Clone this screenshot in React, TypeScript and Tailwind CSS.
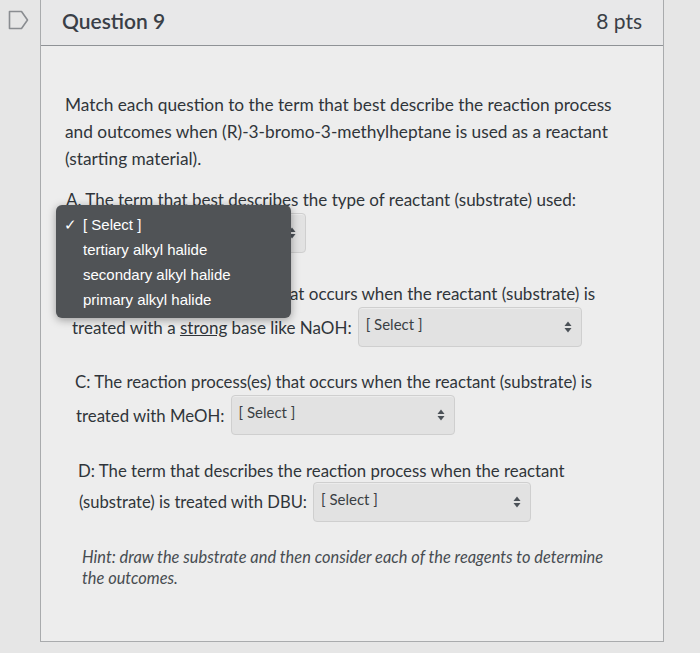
import React from 'react';

const font = { fontFamily: 'Lato, "Open Sans", sans-serif' };

const Arrows = () => (
  <svg width="8" height="12" viewBox="0 0 8 12" className="shrink-0">
    <path d="M4 0.5 L7.5 5 H0.5 Z" fill="#4b5157" />
    <path d="M4 11.5 L7.5 7 H0.5 Z" fill="#4b5157" />
  </svg>
);

const SelectBox = ({ width }: { width: string }) => (
  <div
    className={`${width} h-[40px] flex items-center justify-between pl-[7px] pr-[9px] pb-[6px] rounded-[4px] border border-[#cfcfcf] bg-[#e2e2e2] shadow-[inset_0_1px_0_#ececec]`}
  >
    <span className="text-[15px] text-[#3a3f44] leading-none">[ Select ]</span>
    <span className="pt-[6px]"><Arrows /></span>
  </div>
);

export default function App() {
  const menuItems = ['tertiary alkyl halide', 'secondary alkyl halide', 'primary alkyl halide'];

  return (
    <div className="w-[700px] h-[653px] flex bg-[#e6e6e6] text-[#30353a]" style={font}>
      {/* left gutter */}
      <div className="w-[40px] shrink-0 pt-[10px] pl-[8px]">
        <svg width="21" height="20" viewBox="0 0 21 20">
          <path d="M1.5 1.5 H13.5 L19.5 10 L13.5 18.5 H1.5 Z" fill="none" stroke="#8a8d91" strokeWidth="1.6" strokeLinejoin="round" />
        </svg>
      </div>

      {/* card */}
      <div className="w-[624px] h-[642px] shrink-0 border-l border-r border-b border-[#a9abad] bg-[#ededed] flex flex-col">
        <div className="h-[46px] shrink-0 border-b border-[#8f9296] bg-[#e8e8e9] flex items-center justify-between pl-[21px] pr-[21px] pb-[4px]">
          <span className="text-[21px] font-semibold text-[#3a3f47]">Question 9</span>
          <span className="text-[21px] text-[#3a3f47]">8 pts</span>
        </div>

        <div className="relative flex flex-col pt-[45px] text-[17px] leading-[27px]">
          <p className="ml-[24px] w-[565px] text-[17.3px]">
            Match each question to the term that best describe the reaction process and outcomes when (R)-3-bromo-3-methylheptane is used as a reactant (starting material).
          </p>

          {/* A */}
          <p className="ml-[25px] mt-[14px]">A. The term that best describes the type of reactant (substrate) used:</p>
          <div className="ml-[25px] mt-0">
            <SelectBox width="w-[240px]" />
          </div>

          {/* B */}
          <p className="ml-[31px] mt-[27px]">B. The reaction process(es) that occurs when the reactant (substrate) is</p>
          <div className="ml-[31px] flex items-center gap-[6px]">
            <span>
              treated with a <span className="underline">strong</span> base like NaOH:
            </span>
            <SelectBox width="w-[224px]" />
          </div>

          {/* C */}
          <p className="ml-[34px] mt-[21px] text-[16.8px]">C: The reaction process(es) that occurs when the reactant (substrate) is</p>
          <div className="ml-[35px] flex items-center gap-[6px] text-[16.8px]">
            <span>treated with MeOH:</span>
            <SelectBox width="w-[224px]" />
          </div>

          {/* D */}
          <p className="ml-[37px] mt-[22px] text-[16.8px]">D: The term that describes the reaction process when the reactant</p>
          <div className="ml-[38px] -mt-[2px] flex items-center gap-[6px] text-[16.6px]">
            <span>(substrate) is treated with DBU:</span>
            <SelectBox width="w-[218px]" />
          </div>

          <p className="ml-[41px] mt-[24px] w-[525px] italic font-normal text-[16.4px] leading-[21px] text-[#474c51]">
            Hint: draw the substrate and then consider each of the reagents to determine the outcomes.
          </p>

          {/* open dropdown menu for A */}
          <div
            className="absolute left-[15px] top-[159px] w-[235px] rounded-[6px] bg-[#505356] shadow-[0_2px_8px_rgba(0,0,0,0.35)] pt-[7px] pb-[6px] text-white"
            style={{ fontFamily: '"Liberation Sans", Arial, sans-serif' }}
          >
            <div className="h-[25px] flex items-center text-[15px]">
              <span className="w-[27px] pl-[8px] text-[15px]">✓</span>
              <span>[ Select ]</span>
            </div>
            {menuItems.map((item) => (
              <div key={item} className="h-[25px] flex items-center text-[15px] pl-[27px]">
                {item}
              </div>
            ))}
          </div>
        </div>
      </div>
    </div>
  );
}
